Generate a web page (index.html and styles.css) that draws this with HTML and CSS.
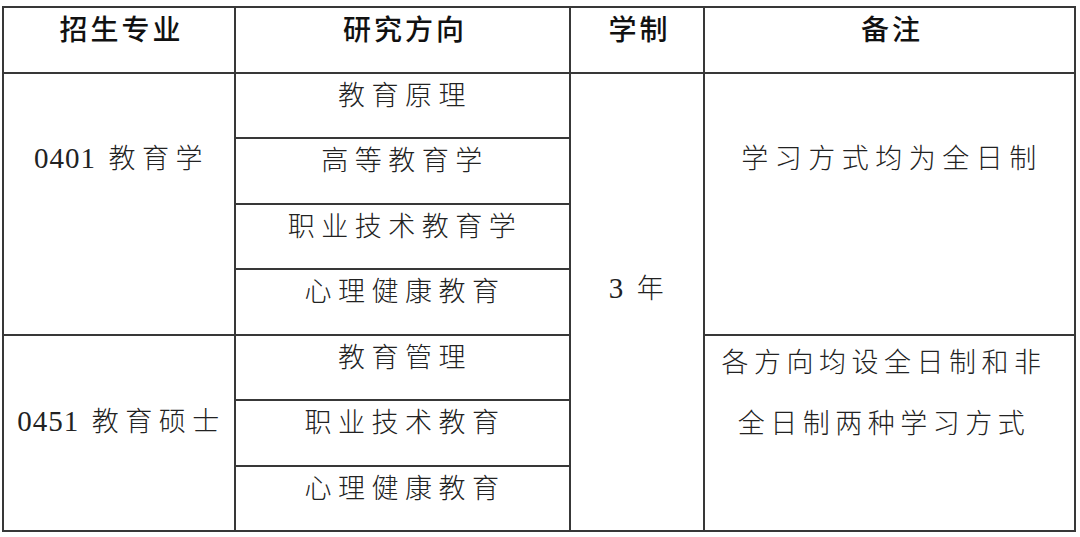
FILE: index.html
```html
<!DOCTYPE html>
<html lang="zh-CN">
<head>
<meta charset="utf-8">
<title>招生专业</title>
<link rel="stylesheet" href="styles.css">
</head>
<body>
<table class="plan">
  <colgroup>
    <col class="c-major">
    <col class="c-dir">
    <col class="c-year">
    <col class="c-note">
  </colgroup>
  <thead>
    <tr>
      <th>招生专业</th>
      <th>研究方向</th>
      <th>学制</th>
      <th>备注</th>
    </tr>
  </thead>
  <tbody>
    <tr>
      <td rowspan="4" class="major m1"><span class="num">0401</span> 教育学</td>
      <td>教育原理</td>
      <td rowspan="7" class="year"><span class="num">3</span> 年</td>
      <td rowspan="4" class="note n1">学习方式均为全日制</td>
    </tr>
    <tr><td>高等教育学</td></tr>
    <tr><td>职业技术教育学</td></tr>
    <tr><td>心理健康教育</td></tr>
    <tr>
      <td rowspan="3" class="major m2"><span class="num">0451</span> 教育硕士</td>
      <td>教育管理</td>
      <td rowspan="3" class="note n2"><div class="two">各方向均设全日制和非<br>全日制两种学习方式</div></td>
    </tr>
    <tr><td>职业技术教育</td></tr>
    <tr><td>心理健康教育</td></tr>
  </tbody>
</table>
</body>
</html>
```
FILE: styles.css
```css
html, body {
  margin: 0;
  padding: 0;
  background: #ffffff;
}

body {
  font-family: "Noto Sans CJK SC", "Noto Sans", sans-serif;
  color: #1a1a1a;
}

.plan {
  margin: 6px 0 0 2px;
  width: 1072px;
  table-layout: fixed;
  border-collapse: collapse;
}

.c-major { width: 232px; }
.c-dir { width: 335px; }
.c-year { width: 134px; }
.c-note { width: 371px; }

.plan th,
.plan td {
  border: 2px solid #383838;
  height: 65.5px;
  padding: 4px 0 0 5px;
  box-sizing: border-box;
  vertical-align: top;
  text-align: center;
  line-height: 32px;
  white-space: nowrap;
}

.plan th {
  font-size: 28px;
  font-weight: 500;
  letter-spacing: 3px;
  color: #111111;
}

.plan td {
  font-size: 27px;
  font-weight: 300;
  letter-spacing: 6.5px;
  color: #222222;
}

.plan .num {
  font-family: "Liberation Serif", serif;
  font-size: 29px;
  font-weight: 400;
  letter-spacing: 1px;
}

.plan td.m1 { padding-top: 67px; }
.plan td.m2 { padding-top: 68px; }
.plan td.year { padding-top: 197px; }
.plan td.n1 { padding-top: 67px; }
.plan td.n2 {
  padding-top: 0;
  padding-right: 16px;
  letter-spacing: 5.5px;
}

.two {
  line-height: 61px;
  margin-top: -6px;
}
```
